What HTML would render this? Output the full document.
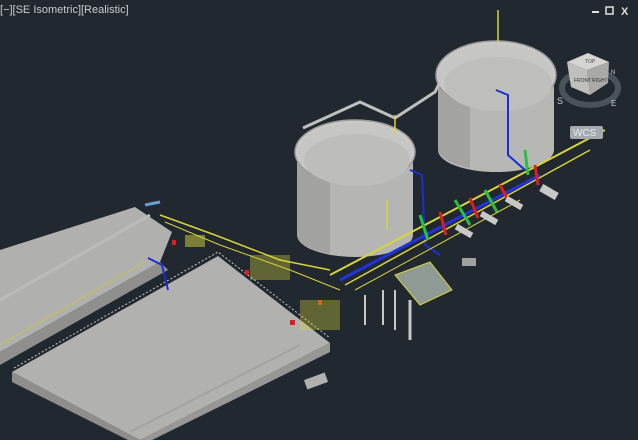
<!DOCTYPE html>
<html><head><meta charset="utf-8"><style>
html,body{margin:0;padding:0;background:#212830;overflow:hidden}
svg{display:block}
text{font-family:"Liberation Sans",sans-serif}
</style></head><body>
<svg width="638" height="440" viewBox="0 0 638 440" xmlns="http://www.w3.org/2000/svg">
<rect width="638" height="440" fill="#212830"/>
<text x="0" y="13" font-size="11" fill="#c9ccd0">[−][SE Isometric][Realistic]</text>
<rect x="592" y="11" width="7" height="2" fill="#e0e0e0"/>
<rect x="606" y="7" width="7" height="7" fill="none" stroke="#e0e0e0" stroke-width="1.5"/>
<text x="621" y="15" font-size="11" font-weight="bold" fill="#e0e0e0">X</text>

<!-- left slab -->
<polygon points="135,207 172,232 160,262 0,352 0,250" fill="#b0b1ae"/>
<polygon points="0,352 160,262 168,270 0,365" fill="#8f908d"/>
<line x1="0" y1="300" x2="150" y2="215" stroke="#bbbcb9" stroke-width="3"/>
<line x1="0" y1="345" x2="145" y2="262" stroke="#c9c24a" stroke-width="1"/>
<!-- bottom slab -->
<polygon points="218,256 330,343 140,440 12,372" fill="#b1b2af"/>
<polygon points="12,372 140,440 140,446 12,382" fill="#8e8f8c"/>
<polygon points="330,343 330,352 140,446 140,440" fill="#979895"/>
<line x1="130" y1="432" x2="300" y2="345" stroke="#a2a3a0" stroke-width="2"/>
<polyline points="14,368 218,252 330,338" fill="none" stroke="#c8c9c5" stroke-width="1" stroke-dasharray="2,2"/>
<rect x="305" y="376" width="22" height="10" fill="#b0b1ae" transform="rotate(-20 316 381)"/>
<rect x="462" y="258" width="14" height="8" fill="#a0a19e"/>

<!-- tank 1 -->
<path d="M297,155 L297,235 A58,22 0 0 0 413,235 L413,155 Z" fill="#b5b6b3"/>
<path d="M297,155 L297,235 A58,22 0 0 0 330,254 L330,170 Z" fill="#a2a3a0"/>
<ellipse cx="355" cy="152" rx="60" ry="32" fill="#c6c7c4" stroke="#9c9d9a" stroke-width="1.5"/>
<ellipse cx="355" cy="152" rx="58" ry="30" fill="none" stroke="#e0e0e0" stroke-width="0.8" stroke-dasharray="1,2"/>
<ellipse cx="357" cy="160" rx="53" ry="26" fill="#bdbebb"/>
<!-- tank 2 -->
<path d="M438,78 L438,150 A58,22 0 0 0 554,150 L554,78 Z" fill="#b7b8b5"/>
<path d="M438,78 L438,150 A58,22 0 0 0 470,168 L470,90 Z" fill="#a3a4a1"/>
<ellipse cx="496" cy="75" rx="60" ry="34" fill="#c6c7c4" stroke="#9c9d9a" stroke-width="1.5"/>
<ellipse cx="496" cy="75" rx="58" ry="32" fill="none" stroke="#e0e0e0" stroke-width="0.8" stroke-dasharray="1,2"/>
<ellipse cx="498" cy="84" rx="54" ry="27" fill="#bebfbc"/>
<polyline points="303,128 360,102 395,118 435,92 440,82" fill="none" stroke="#bfc0bd" stroke-width="3"/>
<line x1="498" y1="10" x2="498" y2="42" stroke="#d8d23a" stroke-width="1.5"/>
<line x1="395" y1="115" x2="395" y2="135" stroke="#d8d23a" stroke-width="1.5"/>
<line x1="387" y1="200" x2="387" y2="230" stroke="#d8d23a" stroke-width="1.5"/>
<polyline points="410,170 422,175 425,245 440,255" fill="none" stroke="#1a2fd0" stroke-width="2"/>
<polyline points="496,90 508,95 508,155 525,170" fill="none" stroke="#1a2fd0" stroke-width="2"/>

<!-- pipe rack -->
<line x1="330" y1="275" x2="605" y2="130" stroke="#d9d33a" stroke-width="2"/>
<line x1="340" y1="280" x2="540" y2="175" stroke="#2233dd" stroke-width="3"/>
<line x1="345" y1="285" x2="590" y2="150" stroke="#d9d33a" stroke-width="1.5"/>
<line x1="355" y1="290" x2="520" y2="200" stroke="#d9d33a" stroke-width="1"/>
<g stroke-width="3">
<line x1="420" y1="215" x2="428" y2="240" stroke="#28c040"/>
<line x1="455" y1="200" x2="470" y2="225" stroke="#28c040"/>
<line x1="485" y1="190" x2="497" y2="212" stroke="#28c040"/>
<line x1="525" y1="150" x2="528" y2="175" stroke="#28c040"/>
<line x1="440" y1="212" x2="446" y2="235" stroke="#d82020"/>
<line x1="470" y1="198" x2="478" y2="218" stroke="#d82020"/>
<line x1="500" y1="185" x2="508" y2="200" stroke="#d82020"/>
<line x1="535" y1="165" x2="538" y2="185" stroke="#d82020"/>
</g>
<g fill="#c8c9c6">
<rect x="455" y="228" width="18" height="6" transform="rotate(30 464 231)"/>
<rect x="480" y="215" width="18" height="6" transform="rotate(30 489 218)"/>
<rect x="505" y="200" width="18" height="6" transform="rotate(30 514 203)"/>
<rect x="540" y="188" width="18" height="8" transform="rotate(30 549 192)"/>
</g>
<polygon points="395,275 430,262 452,290 420,305" fill="#8f9a95" stroke="#d9d33a" stroke-width="1"/>
<line x1="410" y1="300" x2="410" y2="340" stroke="#c8c8c8" stroke-width="3"/>
<line x1="395" y1="290" x2="395" y2="330" stroke="#c8c8c8" stroke-width="2"/>
<line x1="365" y1="295" x2="365" y2="325" stroke="#c8c8c8" stroke-width="2"/>
<line x1="383" y1="290" x2="383" y2="325" stroke="#c8c8c8" stroke-width="2"/>
<polyline points="160,215 215,235 280,260 330,270" fill="none" stroke="#d9d33a" stroke-width="1.5"/>
<polyline points="165,222 220,245 290,270 340,290" fill="none" stroke="#d9d33a" stroke-width="1"/>
<polyline points="145,205 160,202" fill="none" stroke="#6d9ed0" stroke-width="3"/>
<polyline points="148,258 162,265 168,290" fill="none" stroke="#1a2fd0" stroke-width="2"/>
<g fill="#d82020"><rect x="172" y="240" width="4" height="5"/><rect x="245" y="270" width="4" height="5"/><rect x="290" y="320" width="5" height="5"/><rect x="318" y="300" width="4" height="5"/></g>
<g fill="#d9d33a"><rect x="185" y="235" width="20" height="12" opacity=".5"/><rect x="300" y="300" width="40" height="30" opacity=".35"/><rect x="250" y="255" width="40" height="25" opacity=".35"/></g>

<!-- view cube -->
<ellipse cx="590" cy="88" rx="28" ry="17" fill="none" stroke="#4a525a" stroke-width="6"/>
<polygon points="567,62 588,53 609,62 587,70" fill="#d4d5d3"/>
<polygon points="567,62 587,70 590,95 571,87" fill="#bfc0be"/>
<polygon points="587,70 609,62 608,83 590,95" fill="#a9aaa8"/>
<text x="574" y="82" font-size="5" fill="#333">FRONT</text>
<text x="592" y="82" font-size="5" fill="#333">RIGHT</text>
<text x="585" y="63" font-size="5" fill="#444">TOP</text>
<text x="557" y="104" font-size="9" fill="#cfd2d6">S</text>
<text x="611" y="106" font-size="8" fill="#cfd2d6">E</text>
<text x="611" y="74" font-size="6" fill="#cfd2d6">N</text>
<rect x="570" y="126" width="33" height="13" rx="2" fill="#a5aab0"/>
<text x="573" y="136" font-size="10" fill="#e8ebee">WCS</text>
</svg>
</body></html>
